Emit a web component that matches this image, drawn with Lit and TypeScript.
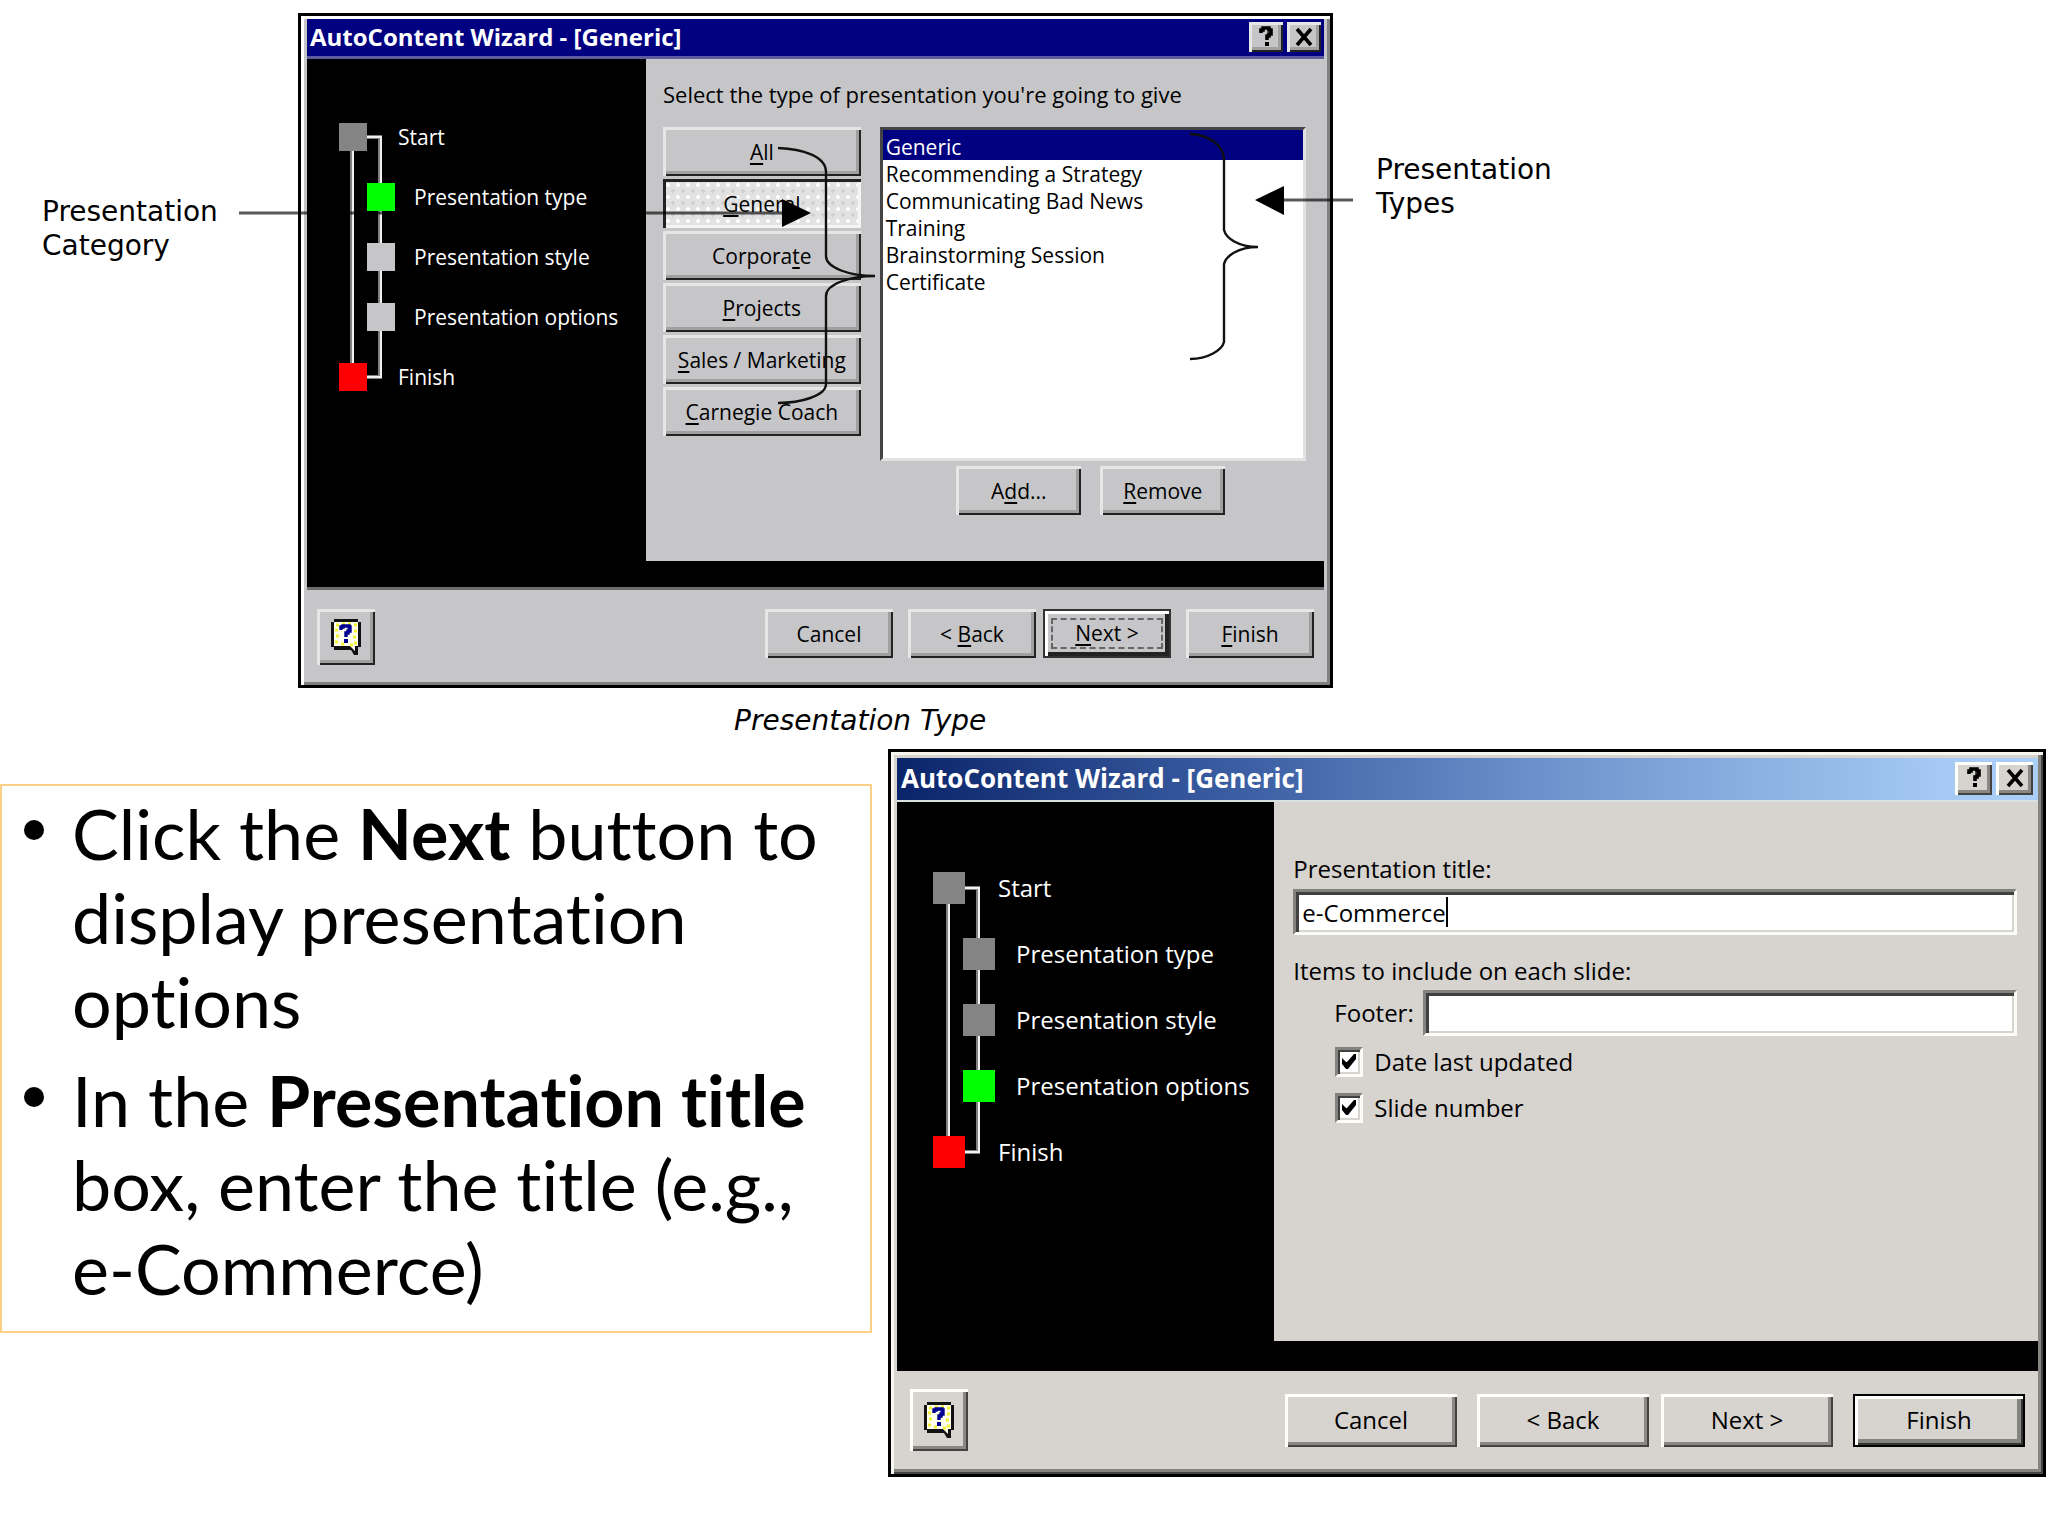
import { LitElement, html, css, svg } from "lit";
import { customElement, property } from "lit/decorators.js";
import { classMap } from "lit/directives/class-map.js";

type StepState = "done" | "current" | "todo" | "end";

const stepFill: Record<StepState, string> = {
  done: "#848484",
  current: "#00ff00",
  todo: "#c6c6c8",
  end: "#ff0000",
};

const stepNames = ["Start", "Presentation type", "Presentation style", "Presentation options", "Finish"];

const buttonStyles = css`
  button {
    box-sizing: border-box;
    margin: 0;
    padding: 0;
    border: 0;
    border-radius: 0;
    font: inherit;
    color: #000;
    background: var(--face);
    box-shadow: inset 3px 3px 0 var(--light), inset -2px -2px 0 var(--dark), inset -5px -5px 0 var(--shade);
    display: flex;
    align-items: center;
    justify-content: center;
    white-space: nowrap;
  }
  u {
    text-decoration-thickness: 2px;
    text-underline-offset: 3px;
  }
`;

/** Window frame with a title bar, a step trail, a content pane and a button row. */
@customElement("wizard-window")
export class WizardWindow extends LitElement {
  @property() heading = "";
  @property({ attribute: false }) states: StepState[] = [];
  @property({ type: Boolean, reflect: true }) modern = false;

  static styles = [
    buttonStyles,
    css`
      :host {
        --face: #c6c6c8;
        --light: #e6e6e6;
        --shade: #a0a0a0;
        --dark: #222;
        display: block;
        box-sizing: border-box;
        border: 3px solid #000;
        padding: 3px 6px;
        background: var(--face);
        box-shadow: inset 3px 3px 0 #fff, inset -3px -3px 0 #808082;
        font: 21px/28px "Open Sans", "Noto Sans", sans-serif;
        color: #000;
      }
      :host([modern]) {
        --face: #d7d3cf;
        --light: #fffffb;
        --shade: #8a8884;
        --dark: #444240;
        padding: 6px 5px 6px 6px;
        box-shadow: inset 3px 3px 0 #f6f6ee, inset -2px -2px 0 #444, inset -5px -5px 0 #86847f;
        font-size: 24px;
        line-height: 32px;
      }
      .title-bar {
        display: flex;
        align-items: center;
        gap: 4px;
        box-sizing: border-box;
        height: 40px;
        padding: 0 3px 2px 3px;
        background: #000080;
        border-bottom: 3px solid #5c5c9e;
        color: #fff;
      }
      :host([modern]) .title-bar {
        height: 44px;
        border-bottom: 2px solid #d9e2e0;
        background: linear-gradient(90deg, #0a246a, #3f62a6 32%, #7398d0 60%, #a6caf4 92%, #a9cef7);
        padding: 0 5px 2px 4px;
      }
      h2 {
        flex: 1;
        margin: 0;
        font: inherit;
        font-size: 24px;
        font-weight: 700;
        white-space: nowrap;
      }
      :host([modern]) h2 {
        font-size: 26px;
      }
      .title-bar button {
        width: 34px;
        height: 30px;
      }
      :host([modern]) .title-bar button {
        width: 37px;
        height: 33px;
      }
      .body {
        display: grid;
        grid-template-columns: minmax(0, 340fr) minmax(0, 680fr);
        background: #000;
        padding-bottom: 26px;
        border-bottom: 3px solid #6c6c6e;
      }
      :host([modern]) .body {
        grid-template-columns: minmax(0, 378fr) minmax(0, 765fr);
        padding-bottom: 30px;
        border-bottom: 0;
      }
      .trail {
        display: flex;
        align-items: flex-start;
        padding: 48px 0 0 32px;
        color: #fff;
      }
      :host([modern]) .trail {
        padding: 53px 0 0 36px;
      }
      .trail svg {
        flex: none;
        display: block;
      }
      ol {
        list-style: none;
        margin: 0;
        padding: 0 0 0 3px;
        display: grid;
        grid-auto-rows: 60px;
        align-items: center;
        white-space: nowrap;
      }
      :host([modern]) ol {
        grid-auto-rows: 66px;
      }
      .inner {
        padding-left: 16px;
      }
      :host([modern]) .inner {
        padding-left: 18px;
      }
      .pane {
        background: var(--face);
        min-width: 0;
      }
      .actions {
        display: flex;
        align-items: flex-start;
        padding: 19px 10px 17px 10px;
      }
      :host([modern]) .actions {
        align-items: center;
        padding: 18px 13px 17px 13px;
      }
      .help {
        width: 58px;
        height: 56px;
        margin-right: auto;
      }
      :host([modern]) .help {
        height: 62px;
      }
    `,
  ];

  private trail() {
    const m = this.modern;
    const size = m ? 32 : 28;
    const pitch = m ? 66 : 60;
    const width = m ? 62 : 56;
    const height = pitch * 5;
    const inner = width - size;
    const mid = (i: number) => pitch * i + pitch / 2;
    const lx = size / 2 - 1;
    const rx = inner + size / 2 - 1;
    const first = mid(0);
    const last = mid(4);
    return html`<svg width=${width} height=${height} viewBox="0 0 ${width} ${height}" aria-hidden="true">
      ${svg`
        <path d="M${lx} ${first}V${last}M${size} ${first}H${rx}V${last}H${size}" fill="none" stroke="#808080" stroke-width="4"/>
        <path d="M${lx + 1} ${first}V${last}M${size} ${first}H${rx + 1}V${last}H${size}" fill="none" stroke="#f0f0f0" stroke-width="2"/>
      `}
      ${this.states.map((s, i) => {
        const x = i === 0 || i === 4 ? 0 : inner;
        return svg`<rect x=${x} y=${mid(i) - size / 2} width=${size} height=${size} fill=${stepFill[s]} shape-rendering="crispEdges"/>`;
      })}
    </svg>`;
  }

  render() {
    return html`
      <header class="title-bar">
        <h2>${this.heading}</h2>
        <button type="button" aria-label="Help">
          <svg width="18" height="22" viewBox="0 0 18 22" aria-hidden="true">
            <path d="M4 7V4H6V2H12V4H14V8H12V10H10V14" fill="none" stroke="#000" stroke-width="3.6" />
            <path d="M8 16h4v4H8z" fill="#000" />
          </svg>
        </button>
        <button type="button" aria-label="Close">
          <svg width="20" height="20" viewBox="0 0 20 20" aria-hidden="true">
            <path d="M3 2L17 18M17 2L3 18" fill="none" stroke="#000" stroke-width="3.6" />
          </svg>
        </button>
      </header>
      <div class="body">
        <nav class="trail" aria-label="Steps">
          ${this.trail()}
          <ol>
            ${stepNames.map((n, i) => html`<li class=${classMap({ inner: i > 0 && i < 4 })}>${n}</li>`)}
          </ol>
        </nav>
        <div class="pane"><slot></slot></div>
      </div>
      <footer class="actions">
        <button class="help" type="button" aria-label="Office Assistant">
          <svg width="32" height="38" viewBox="0 0 32 38" aria-hidden="true">
            <path d="M4 1H28V4H31V29H28V37H24L21 32H4V29H1V4H4Z" fill="#111" />
            <path d="M4 4H28V28H25V33L20 28H4Z" fill="#fffff0" />
            <path d="M6 7h3M12 6h3M18 6h3M24 7h3M5 12h3M24 13h3M6 18h3M23 19h3M5 24h3M11 26h3M24 25h3M20 27h3" stroke="#f2f230" stroke-width="3" />
            <path d="M11 12V9H13V8H19V9H20V13H18V15H16V19" fill="none" stroke="#000090" stroke-width="3.4" />
            <path d="M14 21h4v4h-4z" fill="#000090" />
          </svg>
        </button>
        <slot name="actions"></slot>
      </footer>
    `;
  }
}

@customElement("app-root")
export class AppRoot extends LitElement {
  static styles = [
    buttonStyles,
    css`
      :host {
        display: block;
        background: #fff;
        color: #000;
        font-family: "Open Sans", "Noto Sans", sans-serif;
      }
      .page {
        padding-top: 13px;
      }
      .figure {
        position: relative;
        margin: 0;
      }
      .figure-row {
        display: grid;
        grid-template-columns: minmax(0, 298fr) minmax(0, 1035fr) minmax(0, 715fr);
        align-items: start;
      }
      .callout,
      figcaption {
        font: 28px/34px "DejaVu Sans", sans-serif;
      }
      .callout {
        margin: 0;
      }
      .callout.left {
        padding: 182px 0 0 42px;
      }
      .callout.right {
        padding: 140px 0 0 43px;
      }
      figcaption {
        font-style: italic;
        padding: 16px 0 11px;
        text-align: center;
        margin-right: 16%;
      }
      .marks {
        position: absolute;
        left: 0;
        top: 0;
        width: 100%;
        height: 675px;
        pointer-events: none;
      }
      .types {
        padding: 21px 18px 46px 17px;
      }
      .types p {
        margin: 0 0 19px;
        font-size: 22px;
      }
      .choices {
        display: grid;
        grid-template-columns: minmax(0, 198fr) minmax(0, 427fr);
        column-gap: 19px;
        row-gap: 5px;
      }
      .categories {
        display: flex;
        flex-direction: column;
        gap: 3px;
        grid-row: span 2;
      }
      .categories button {
        height: 49px;
      }
      .categories .pressed {
        background-color: #e2e2e2;
        background-image: radial-gradient(circle, #fff 2px, transparent 2px), radial-gradient(circle, #d0d0d0 2px, transparent 2px);
        background-size: 10px 12px;
        background-position: 0 0, 5px 6px;
        box-shadow: inset 3px 3px 0 #222, inset -3px -3px 0 #f4f4f4;
      }
      select {
        display: block;
        box-sizing: border-box;
        width: 100%;
        height: 334px;
        margin: 0;
        padding: 0;
        border: 3px solid;
        border-color: #444 #e2e2e2 #e2e2e2 #444;
        border-radius: 0;
        background: #fff;
        outline: 0;
        font: inherit;
        color: #000;
        overflow: hidden;
        appearance: none;
      }
      option {
        padding: 0 0 0 3px;
        height: 27px;
        min-height: 27px;
        line-height: 27px;
        font-size: 21px;
      }
      option:checked {
        padding-top: 3px;
        background: #000080 linear-gradient(#000080, #000080);
        color: #fff;
        -webkit-text-fill-color: #fff;
      }
      .list-actions {
        display: flex;
        justify-content: center;
        gap: 19px;
        padding-right: 4px;
      }
      .list-actions button {
        width: 125px;
        height: 49px;
      }
      .first .action {
        width: 128px;
        height: 49px;
        margin-left: 15px;
      }
      .first .action.default {
        margin-left: 7px;
        box-shadow: inset 0 0 0 2px #333, inset 5px 5px 0 #fff, inset -6px -6px 0 #222;
      }
      .dotted {
        border: 2px dashed #666;
        padding: 0 22px;
        line-height: 27px;
      }
      .second .action {
        width: 172px;
        height: 53px;
        margin-left: 20px;
      }
      .second .action.next {
        margin-left: 12px;
      }
      .second .action.default {
        box-shadow: inset 0 0 0 2px #000, inset 5px 5px 0 #fff, inset -4px -4px 0 #333, inset -8px -8px 0 #86847f;
      }
      .lower {
        display: grid;
        grid-template-columns: minmax(0, 872fr) minmax(0, 1158fr);
        column-gap: 16px;
        padding-right: 2px;
        align-items: start;
      }
      .notes {
        margin: 35px 0 0;
        box-sizing: border-box;
        border: 2px solid #fad184;
        padding: 5px 20px 21px 70px;
        list-style: none;
        font: 70px/84px Lato, sans-serif;
        font-variant-ligatures: none;
      }
      .notes li {
        position: relative;
      }
      .notes li + li {
        margin-top: 15px;
      }
      .notes li::before {
        content: "";
        position: absolute;
        left: -48px;
        top: 29px;
        width: 20px;
        height: 20px;
        border-radius: 50%;
        background: #000;
      }
      .keep {
        white-space: nowrap;
      }
      .options {
        padding: 51px 21px 203px 19px;
      }
      .options label {
        display: block;
      }
      .text-box {
        position: relative;
      }
      input[type="text"] {
        display: block;
        box-sizing: border-box;
        width: 100%;
        height: 46px;
        margin: 0;
        padding: 0 6px;
        border: 3px solid;
        border-color: #84827e #fbfbf7 #fbfbf7 #84827e;
        border-radius: 0;
        background: #fff;
        box-shadow: inset 3px 3px 0 #404040, inset -2px -2px 0 #d7d3cf;
        outline: 0;
        font: inherit;
        color: #000;
      }
      .title-field {
        margin: 4px 0 20px;
      }
      .caret {
        position: absolute;
        left: 153px;
        top: 8px;
        width: 2px;
        height: 30px;
        background: #000;
      }
      .footer-row {
        display: flex;
        align-items: center;
        gap: 10px;
        padding: 3px 0 10px 41px;
      }
      .footer-row .text-box {
        flex: 1;
      }
      .footer-row label {
        width: 79px;
      }
      .check {
        display: flex;
        align-items: center;
        gap: 11px;
        padding: 0 0 14px 42px;
      }
      .check input {
        appearance: none;
        box-sizing: border-box;
        width: 28px;
        height: 30px;
        margin: 0;
        border: 3px solid;
        border-color: #84827e #fbfbf7 #fbfbf7 #84827e;
        background: #fff;
        box-shadow: inset 2px 2px 0 #404040, inset -2px -2px 0 #d7d3cf;
      }
      .tick {
        display: grid;
      }
      .tick > * {
        grid-area: 1 / 1;
      }
      .tick svg {
        place-self: center;
        pointer-events: none;
      }
    `,
  ];

  private check(id: string, text: string) {
    return html`<div class="check">
      <span class="tick">
        <input id=${id} type="checkbox" checked />
        <svg width="14" height="16" viewBox="0 0 14 16" aria-hidden="true">
          <path d="M0 4L4 8L5 8L12 0H14V5L6 15H4L0 10Z" fill="#000" />
        </svg>
      </span>
      <label for=${id}>${text}</label>
    </div>`;
  }

  render() {
    return html`
      <main class="page">
        <figure class="figure">
          <div class="figure-row">
            <p class="callout left">Presentation<br />Category</p>
            <wizard-window
              class="first"
              heading="AutoContent Wizard - [Generic]"
              .states=${["done", "current", "todo", "todo", "end"] as StepState[]}
            >
              <div class="types">
                <p id="types-label">Select the type of presentation you're going to give</p>
                <div class="choices">
                  <div class="categories">
                    <button type="button"><span><u>A</u>ll</span></button>
                    <button type="button" class="pressed"><span><u>G</u>eneral</span></button>
                    <button type="button"><span>Corpora<u>t</u>e</span></button>
                    <button type="button"><span><u>P</u>rojects</span></button>
                    <button type="button"><span><u>S</u>ales / Marketing</span></button>
                    <button type="button"><span><u>C</u>arnegie Coach</span></button>
                  </div>
                  <select size="12" aria-labelledby="types-label">
                    <option selected>Generic</option>
                    <option>Recommending a Strategy</option>
                    <option>Communicating Bad News</option>
                    <option>Training</option>
                    <option>Brainstorming Session</option>
                    <option>Certificate</option>
                  </select>
                  <div class="list-actions">
                    <button type="button"><span>A<u>d</u>d...</span></button>
                    <button type="button"><span><u>R</u>emove</span></button>
                  </div>
                </div>
              </div>
              <button slot="actions" class="action" type="button">Cancel</button>
              <button slot="actions" class="action" type="button"><span>&lt; <u>B</u>ack</span></button>
              <button slot="actions" class="action default" type="button">
                <span class="dotted"><u>N</u>ext &gt;</span>
              </button>
              <button slot="actions" class="action" type="button"><span><u>F</u>inish</span></button>
            </wizard-window>
            <p class="callout right">Presentation<br />Types</p>
          </div>
          <svg class="marks" viewBox="0 13 2048 675" preserveAspectRatio="none" aria-hidden="true">
            <g fill="none" stroke="#000" stroke-opacity=".65" stroke-width="3">
              <path d="M239 213H785M1282 200H1353" />
            </g>
            <g fill="none" stroke="#111" stroke-width="2.4">
              <path d="M778 148C802 149 826 156 826 172V256C826 268 850 276 875 276C850 276 826 284 826 296V384C826 396 800 403 778 403" />
              <path d="M1190 134C1210 135 1224 146 1224 160V230C1226 238 1238 247 1258 247C1238 247 1226 256 1224 264V342C1222 350 1208 359 1190 359" />
            </g>
            <path d="M782 199L811 213L782 227ZM1284 186L1255 200L1284 215Z" fill="#000" />
          </svg>
          <figcaption>Presentation Type</figcaption>
        </figure>
        <section class="lower">
          <ul class="notes">
            <li>Click the <b>Next</b> button to display presentation options</li>
            <li>
              In the <b>Presentation title</b> box, enter the title (e.g.,
              <span class="keep">e-Commerce)</span>
            </li>
          </ul>
          <wizard-window
            modern
            class="second"
            heading="AutoContent Wizard - [Generic]"
            .states=${["done", "done", "done", "current", "end"] as StepState[]}
          >
            <div class="options">
              <label for="title">Presentation title:</label>
              <div class="text-box title-field">
                <input id="title" type="text" value="e-Commerce" />
                <span class="caret"></span>
              </div>
              <div>Items to include on each slide:</div>
              <div class="footer-row">
                <label for="footer">Footer:</label>
                <div class="text-box"><input id="footer" type="text" /></div>
              </div>
              ${this.check("date", "Date last updated")} ${this.check("number", "Slide number")}
            </div>
            <button slot="actions" class="action" type="button">Cancel</button>
            <button slot="actions" class="action" type="button">&lt; Back</button>
            <button slot="actions" class="action next" type="button">Next &gt;</button>
            <button slot="actions" class="action default" type="button">Finish</button>
          </wizard-window>
        </section>
      </main>
    `;
  }
}
